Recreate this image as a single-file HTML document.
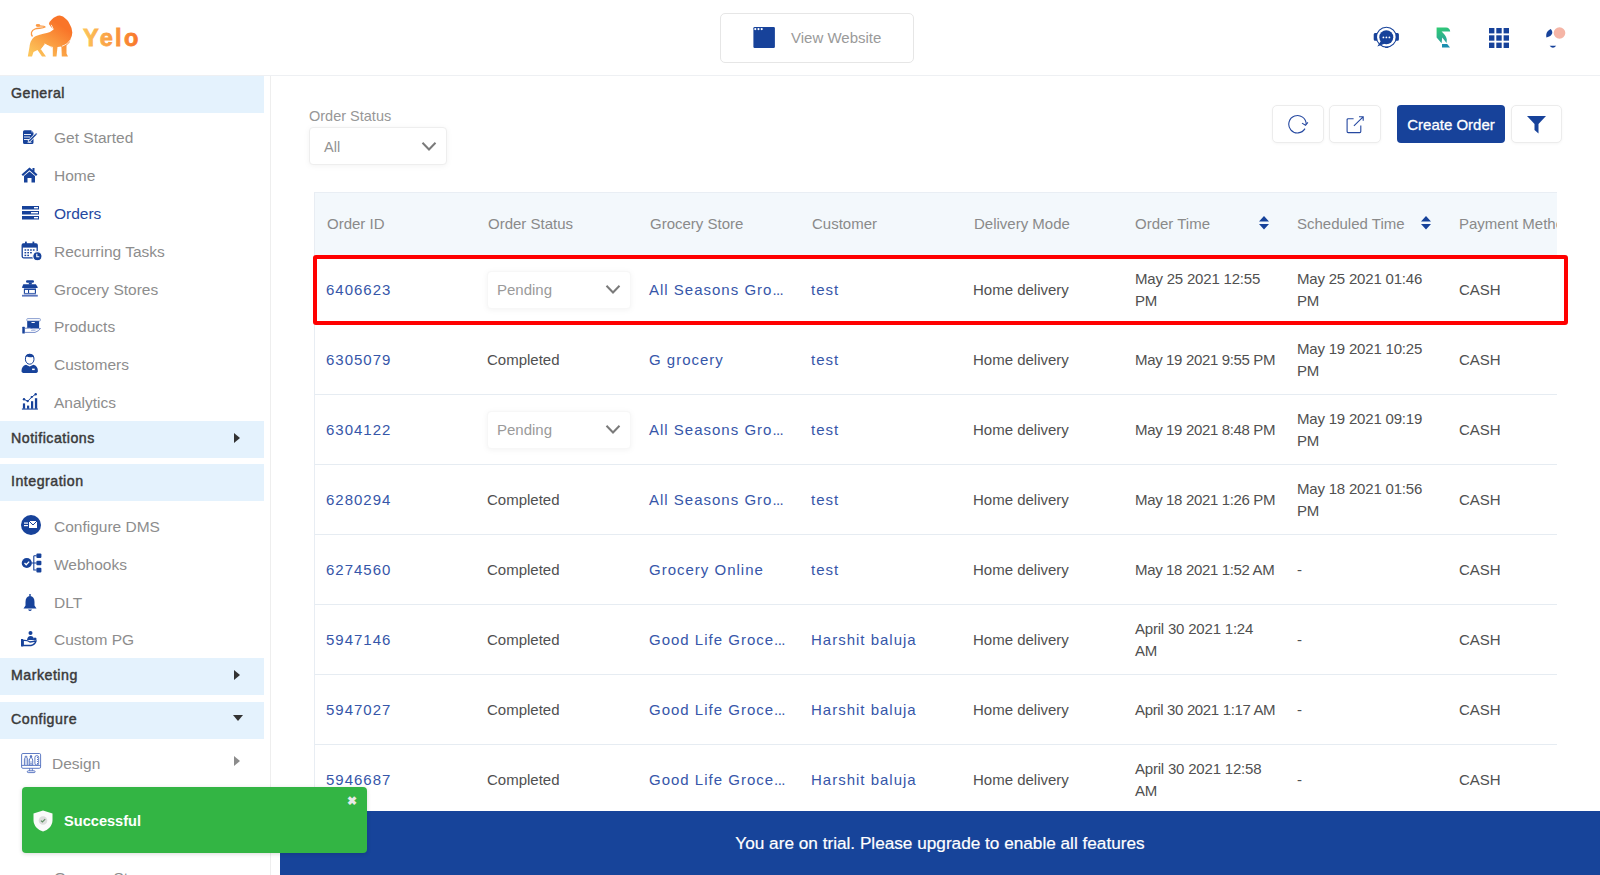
<!DOCTYPE html>
<html><head><meta charset="utf-8">
<style>
*{box-sizing:border-box;margin:0;padding:0}
html,body{width:1600px;height:875px;overflow:hidden;background:#fff;font-family:"Liberation Sans",sans-serif}
.a{position:absolute}
#top{left:0;top:0;width:1600px;height:76px;border-bottom:1px solid #eef0f3;background:#fff}
#side{left:0;top:76px;width:271px;height:799px;border-right:1px solid #eeeeee;background:#fff;overflow:hidden}
.sh{position:absolute;left:0;width:264px;height:37px;background:#e4f2fd;color:#3a3a3a;font-weight:normal;-webkit-text-stroke:0.45px #3a3a3a;letter-spacing:0.5px;font-size:14.2px;line-height:35.5px;padding-left:11px}
.si{position:absolute;left:0;width:264px;height:38px;font-size:15.5px;color:#8d8d8d;line-height:40px}
.si .t{position:absolute;left:54px;top:0}
.si svg{position:absolute}
.tri{position:absolute;width:0;height:0;border-top:5px solid transparent;border-bottom:5px solid transparent;border-left:6px solid #333}
.trid{position:absolute;width:0;height:0;border-left:5px solid transparent;border-right:5px solid transparent;border-top:6px solid #333}
.btn{position:absolute;border:1px solid #ececec;border-radius:5px;background:#fff;box-shadow:0 1px 3px rgba(0,0,0,0.04)}
#tbl{left:314px;top:192px;width:1243px;height:630px;overflow:hidden;border-left:1px solid #e8edf3}
.th{position:absolute;left:0;top:0;width:1300px;height:63px;background:#f3f8fc;border-top:1px solid #e9eef4}
.th span{position:absolute;top:0;line-height:62px;font-size:15px;color:#8a8a8a;white-space:nowrap}
.row{position:absolute;left:0;width:1300px;height:70px;border-bottom:1px solid #e6ecf2}
.row span{position:absolute;font-size:15px;white-space:nowrap}
.c{color:#505050;top:0;line-height:69px}
.l{color:#3656a9;letter-spacing:1px;top:0;line-height:69px}
.m{color:#505050;top:13px;line-height:22px;letter-spacing:-0.2px}
.sel{position:absolute;border:1px solid #f7f7f7;border-radius:4px;background:#fff;box-shadow:0 1px 6px rgba(0,0,0,0.05)}
.chev{position:absolute;width:9px;height:9px;border-right:1.8px solid #777;border-bottom:1.8px solid #777;transform:rotate(45deg)}
</style></head><body>

<div id="top" class="a">
  <!-- logo -->
  <svg class="a" style="left:27px;top:15px" width="47" height="43" viewBox="0 0 47 43">
    <defs><linearGradient id="lg" x1="0.2" y1="1" x2="0.75" y2="0.25"><stop offset="0" stop-color="#fcc45a"/><stop offset="1" stop-color="#f97529"/></linearGradient></defs>
    <path fill="url(#lg)" d="M32.8 0.4L36 1.5L39 4L41 6L43 9.8L44.5 13L45.3 17.6L44.8 21L43.5 24L42.5 27.5L39.5 30.5L39.5 38.5L41 41.4L34.8 41.4L34.4 31.6L30.5 32L29.5 41.4L25.8 41.4L25.8 33C23 31.5 20 30 18 29L14 34.5L19 41.4L15 41.4L10.5 35L6.5 37L5 41.4L0.8 41.4L2.5 32C3 27 5 23 9 21C14 19 19 18.5 23 17L26.6 14.5L24 12L21.9 9L22.5 7L25 4.3C27 2 30 0.5 32.8 0.4Z"/>
    <path fill="none" stroke="#fb9a45" stroke-width="1.3" d="M5.5 21.5C3.5 19 4 15.5 8 14C11 13 16 13.5 18 12C18 10.8 14 10.8 12 10.8"/>
    <ellipse cx="11" cy="10.5" rx="2.3" ry="1.4" fill="#fb9a45"/><path d="M24.2 9.8L26.3 14.2M43.2 25C41.5 28 38.5 30 35 31.2M17.5 28.8C20 30.5 23 31.8 26 32.5M14 34.5L18 29.5" stroke="#fff" stroke-width="0.8" fill="none"/>
  </svg>
  <svg class="a" style="left:80px;top:20px" width="62" height="32" viewBox="0 0 62 32"><defs><linearGradient id="yg" x1="0" y1="0" x2="1" y2="0"><stop offset="0" stop-color="#fcc55b"/><stop offset="1" stop-color="#f87428"/></linearGradient></defs><text x="3" y="26.3" font-family="Liberation Sans" font-weight="bold" font-size="23.5" letter-spacing="2.3" fill="url(#yg)" stroke="url(#yg)" stroke-width="0.8">Yelo</text></svg>

  <!-- view website -->
  <div class="btn" style="left:720px;top:13px;width:194px;height:50px;border-color:#e6e6e6;box-shadow:none"></div>
  <svg class="a" style="left:753px;top:27px" width="23" height="21" viewBox="0 0 23 21"><rect x="0.4" y="0" width="21.5" height="21" rx="1.2" fill="#17429a"/><circle cx="2.3" cy="2.1" r="1.1" fill="#fff"/><circle cx="5.5" cy="2.1" r="1.1" fill="#fff"/><circle cx="8.7" cy="2.1" r="1.1" fill="#fff"/></svg>
  <div class="a" style="left:791px;top:29px;font-size:15px;color:#9a9a9a;line-height:18px">View Website</div>

  <!-- right icons -->
  <svg class="a" style="left:1372px;top:26px" width="29" height="24" viewBox="0 0 29 24">
    <circle cx="14.4" cy="11.2" r="9.9" fill="none" stroke="#17429a" stroke-width="1.1"/>
    
    <circle cx="14.3" cy="11.2" r="7" fill="#17429a"/>
    <path d="M9.2 14.5L5.3 20.5L12.5 17.8Z" fill="#17429a"/>
    <path d="M5.2 7H3Q1.7 7 1.7 8.5V13.2Q1.7 14.7 3 14.7H5.2Q4.4 11 5.2 7Z" fill="#17429a"/><path d="M23.5 7H25.6Q26.9 7 26.9 8.5V13.2Q26.9 14.7 25.6 14.7H23.5Q24.3 11 23.5 7Z" fill="#17429a"/>
    <ellipse cx="14.8" cy="21.4" rx="1.8" ry="0.7" fill="#17429a"/>
    <circle cx="11.4" cy="11.4" r="0.9" fill="#fff"/><circle cx="14.4" cy="11.4" r="0.9" fill="#fff"/><circle cx="17.4" cy="11.4" r="0.9" fill="#fff"/>
  </svg>
  <svg class="a" style="left:1436px;top:27px" width="15" height="22" viewBox="0 0 15 22">
    <defs><linearGradient id="gg" x1="0" y1="0" x2="0.3" y2="1"><stop offset="0" stop-color="#30cc72"/><stop offset="1" stop-color="#2aa39a"/></linearGradient></defs>
    <path fill="url(#gg)" d="M0.6 0.6L10 0.6C12.5 0.6 14.2 2.5 14.2 4.6L5.6 4.4C8 6.5 10.2 9 10.8 12.2L10.6 16L6.2 10.6L5.6 16.2L0.6 10.6Z"/>
    <path fill="#1a8fb0" d="M6 17L11.2 17L14 20.6L6 20.6Z"/>
  </svg>
  <svg class="a" style="left:1489px;top:28px" width="20" height="20" viewBox="0 0 20 20" fill="#17429a">
    <rect x="0" y="0" width="5.4" height="5.4"/><rect x="7.3" y="0" width="5.4" height="5.4"/><rect x="14.6" y="0" width="5.4" height="5.4"/>
    <rect x="0" y="7.3" width="5.4" height="5.4"/><rect x="7.3" y="7.3" width="5.4" height="5.4"/><rect x="14.6" y="7.3" width="5.4" height="5.4"/>
    <rect x="0" y="14.6" width="5.4" height="5.4"/><rect x="7.3" y="14.6" width="5.4" height="5.4"/><rect x="14.6" y="14.6" width="5.4" height="5.4"/>
  </svg>
  <svg class="a" style="left:1544px;top:26px" width="24" height="24" viewBox="0 0 24 24">
    <path d="M2.4 11.6C1.5 7.5 3.5 4.5 6.6 3C9.5 5.5 9 10 2.4 11.6Z" fill="#17429a"/>
    <path d="M5.6 19.8H12.2Q9 23.8 5.6 19.8Z" fill="#17429a"/>
    <circle cx="15.5" cy="7" r="5.8" fill="#f5b5a6"/>
  </svg>
</div>

<div id="side" class="a">
  <div class="sh" style="top:0">General</div>
  <div class="si" style="top:42px"><svg style="left:22px;top:12px" width="16" height="15" viewBox="0 0 16 15"><path d="M2.5 0.3H9L11.5 2.8V12.5A1.5 1.5 0 0 1 10 14H2.5A1.5 1.5 0 0 1 1 12.5V1.8A1.5 1.5 0 0 1 2.5 0.3Z" fill="#17429a"/><path d="M9.2 0.3L11.5 2.6H9.2Z" fill="#7d94cc"/><path d="M2 4.5H9M2 7H8M2 9.5H7" stroke="#fff" stroke-width="0.9"/><path d="M6.5 11.8L13.8 4.5" stroke="#fff" stroke-width="2.8"/><path d="M7 11.3L14 4.3" stroke="#17429a" stroke-width="1.4"/><circle cx="14.3" cy="4" r="0.9" fill="#7d94cc"/><path d="M5.5 12.3H9.5" stroke="#fff" stroke-width="0.8"/></svg><span class="t">Get Started</span></div>
  <div class="si" style="top:80px"><svg style="left:21px;top:11px" width="17" height="16" viewBox="0 0 17 16"><path d="M8.5 0.5L0.5 7.5L2 9L8.5 3.3L15 9L16.5 7.5L13.5 4.8V1H11.5V3L8.5 0.5Z" fill="#17429a"/><path d="M3 9L8.5 4.5L14 9V15.5H10.5V11H6.5V15.5H3Z" fill="#17429a"/></svg><span class="t">Home</span></div>
  <div class="si" style="top:118px;color:#2548a0"><svg style="left:22px;top:12px" width="17" height="14" viewBox="0 0 17 14" fill="#17429a"><rect x="0" y="0" width="17" height="3.5"/><rect x="0" y="5" width="17" height="3.5"/><rect x="0" y="10" width="17" height="3.5"/><rect x="12" y="1" width="4" height="1.4" fill="#fff"/><rect x="9" y="6" width="7" height="1.4" fill="#fff"/><rect x="12" y="11" width="4" height="1.4" fill="#fff"/></svg><span class="t">Orders</span></div>
  <div class="si" style="top:156px"><svg style="left:21px;top:9px" width="22" height="20" viewBox="0 0 22 20"><rect x="1.2" y="2.8" width="15" height="14" rx="1.5" fill="none" stroke="#17429a" stroke-width="1.3"/><rect x="1.2" y="2.8" width="15" height="3.8" fill="#17429a"/><rect x="4" y="0.6" width="1.8" height="3.5" fill="#17429a"/><rect x="11.5" y="0.6" width="1.8" height="3.5" fill="#17429a"/><g fill="#17429a"><rect x="3.5" y="8.3" width="1.7" height="1.4"/><rect x="6.3" y="8.3" width="1.7" height="1.4"/><rect x="9.1" y="8.3" width="1.7" height="1.4"/><rect x="11.9" y="8.3" width="1.7" height="1.4"/><rect x="3.5" y="11" width="1.7" height="1.4"/><rect x="6.3" y="11" width="1.7" height="1.4"/><rect x="9.1" y="11" width="1.7" height="1.4"/><rect x="3.5" y="13.7" width="1.7" height="1.4"/><rect x="6.3" y="13.7" width="1.7" height="1.4"/></g><circle cx="16.4" cy="15.2" r="4.6" fill="#17429a" stroke="#fff" stroke-width="1.1"/><path d="M15.8 12.8V15.8H18.3" stroke="#fff" stroke-width="1.1" fill="none"/></svg><span class="t">Recurring Tasks</span></div>
  <div class="si" style="top:194px"><svg style="left:21px;top:10px" width="18" height="18" viewBox="0 0 18 18"><rect x="5" y="0.2" width="8" height="2.5" rx="1.2" fill="#17429a"/><rect x="7.8" y="2.5" width="3" height="2" fill="#17429a"/><path d="M2.3 4.3H14.8L16.8 7.2Q16.8 8 16 8H1.8Q1 8 1 7.2Z" fill="#17429a"/><rect x="2.9" y="8" width="12" height="1.1" fill="#8ba0d3"/><rect x="3.4" y="9.4" width="11" height="4.1" fill="none" stroke="#17429a" stroke-width="1.1"/><rect x="7" y="9" width="1.1" height="4.8" fill="#17429a"/><rect x="3" y="13.5" width="12" height="1" fill="#8ba0d3"/><rect x="1" y="14.8" width="15.8" height="1.8" fill="#5c76bd"/></svg><span class="t">Grocery Stores</span></div>
  <div class="si" style="top:231px"><svg style="left:21px;top:10px" width="21" height="18" viewBox="0 0 21 18"><rect x="5.8" y="1.6" width="13.6" height="2.4" rx="0.8" fill="none" stroke="#7f95cc" stroke-width="0.9"/><rect x="6.2" y="4.1" width="11.9" height="7" fill="#17429a"/><rect x="10.4" y="5" width="3.5" height="1" rx="0.5" fill="#fff"/><rect x="1.3" y="9.8" width="2.5" height="6.8" rx="0.5" fill="#17429a"/><path d="M3.8 11.3Q9 10.5 12 11.8L19.5 11.5Q18 14 14 15.4H4" fill="none" stroke="#6680c4" stroke-width="0.9"/><path d="M10 13.3H14.5" stroke="#8ba0d3" stroke-width="0.8"/></svg><span class="t">Products</span></div>
  <div class="si" style="top:269px"><svg style="left:21px;top:8px" width="18" height="21" viewBox="0 0 18 21"><ellipse cx="8.7" cy="6.2" rx="4.3" ry="5" fill="none" stroke="#17429a" stroke-width="1"/><path d="M4.2 5.5Q4 1 8.7 1.1Q13.4 1 13.2 5.5Q12.6 3.6 10.5 4.3Q7 4.6 5.5 3.3Q4.8 4 4.2 5.5Z" fill="#17429a"/><path d="M0.5 18Q0.5 13 5 11.8L8.7 13.5L12.4 11.8Q16.9 13 16.9 18Q16.9 20 14 20H3.5Q0.5 20 0.5 18Z" fill="#17429a"/><rect x="11.1" y="15.6" width="2.6" height="1.5" fill="#fff"/></svg><span class="t">Customers</span></div>
  <div class="si" style="top:307px"><svg style="left:21px;top:10px" width="18" height="17" viewBox="0 0 18 17" fill="#17429a"><rect x="1.9" y="10.4" width="2.2" height="5.4"/><rect x="6" y="12.6" width="2.2" height="3.2"/><rect x="10" y="8.2" width="2.2" height="7.6"/><rect x="13.9" y="5.2" width="2.3" height="10.6"/><rect x="0.9" y="15.5" width="16" height="1.1"/><path d="M3 6.3L6.7 8.2L10.7 4.1L14.7 1.2" stroke="#17429a" stroke-width="1" fill="none"/><circle cx="3" cy="6.3" r="1.2"/><circle cx="6.7" cy="8.2" r="1.1"/><circle cx="10.7" cy="4.1" r="1.1"/><circle cx="14.7" cy="1.2" r="1.2"/></svg><span class="t">Analytics</span></div>
  <div class="sh" style="top:345px">Notifications<span class="tri" style="left:234px;top:12px"></span></div>
  <div class="sh" style="top:388px">Integration</div>
  <div class="si" style="top:431px"><svg style="left:21px;top:8px" width="20" height="20" viewBox="0 0 20 20"><circle cx="10" cy="10" r="10" fill="#17429a"/><rect x="8" y="6" width="8" height="7" fill="#fff"/><path d="M8 6L12 10L16 6" stroke="#17429a" stroke-width="1" fill="none"/><rect x="3" y="7.5" width="4" height="1.2" fill="#fff"/><rect x="3" y="10" width="4" height="1.2" fill="#fff"/></svg><span class="t">Configure DMS</span></div>
  <div class="si" style="top:469px"><svg style="left:21px;top:8px" width="22" height="20" viewBox="0 0 22 20"><circle cx="5.8" cy="10" r="5.1" fill="#17429a"/><path d="M3.5 10L5.2 11.7L8.2 8.6" stroke="#fff" stroke-width="1.3" fill="none"/><path d="M10.5 10H15.6M12.8 2.8V17H15.6M12.8 2.8H15.6" stroke="#17429a" stroke-width="1.1" fill="none"/><rect x="15.4" y="0.5" width="5" height="4.6" rx="1" fill="#17429a"/><rect x="15.4" y="7.7" width="5" height="4.6" rx="1" fill="#17429a"/><rect x="15.4" y="14.8" width="5" height="4.6" rx="1" fill="#17429a"/></svg><span class="t">Webhooks</span></div>
  <div class="si" style="top:507px"><svg style="left:23px;top:11px" width="14" height="18" viewBox="0 0 14 18" fill="#17429a"><rect x="6.3" y="0" width="1.4" height="2.5"/><path d="M7 2Q2.5 2.5 2.5 8V11.5L0.5 14.5H13.5L11.5 11.5V8Q11.5 2.5 7 2Z"/><path d="M5 15.5Q7 18.5 9 15.5Z"/></svg><span class="t">DLT</span></div>
  <div class="si" style="top:544px"><svg style="left:21px;top:11px" width="17" height="16" viewBox="0 0 17 16" fill="#17429a"><circle cx="9.5" cy="2" r="2"/><path d="M6 9Q6.5 5 9.5 5Q13 5 13 9Z"/><circle cx="14" cy="8" r="1.6"/><rect x="0" y="8" width="2.2" height="7.5"/><path d="M2.2 9.5Q6 9 9 11L15 10Q14 13.5 10 14.5H2.2Z" fill="none" stroke="#17429a" stroke-width="1.4"/></svg><span class="t">Custom PG</span></div>
  <div class="sh" style="top:582px">Marketing<span class="tri" style="left:234px;top:12px"></span></div>
  <div class="sh" style="top:626px">Configure<span class="trid" style="left:233px;top:13px"></span></div>
  <div class="si" style="top:668px"><svg style="left:21px;top:9px" width="21" height="21" viewBox="0 0 21 21" fill="none" stroke="#4e6dbd" stroke-width="0.9"><rect x="0.6" y="0.5" width="19" height="14.8" rx="1.3"/><path d="M0.6 12.4H19.6M8.7 15.3V17.8M11.3 15.3V17.8"/><rect x="6.3" y="17.8" width="7.8" height="1.8" rx="0.9"/><path d="M3.4 12V6Q3.4 5.3 4.2 5.3V3.3H5.8V5.3Q6.7 5.3 6.7 6V12"/><path d="M5 6V12" stroke="#8ba0d3"/><path d="M10 3.2L11.7 7V12H8.3V7Z"/><circle cx="10" cy="3.3" r="0.8" fill="#4e6dbd"/><path d="M8.5 9H11.5M8.5 10.5H11.5" stroke="#8ba0d3"/><rect x="13.9" y="2.6" width="3.8" height="9.5" rx="1.9"/><path d="M16 4.5H17M16 6.5H17M16 8.5H17M16 10.5H17"/></svg><span class="t" style="left:52px">Design</span><span class="tri" style="left:234px;top:12px;border-left-color:#8c8c8c"></span></div>
  <div class="si" style="top:781.5px"><span class="t">Grocery Store</span></div>
</div>

<!-- content top controls -->
<div class="a" style="left:309px;top:107px;font-size:14.5px;color:#979797;line-height:18px">Order Status</div>
<div class="sel" style="left:309px;top:127px;width:138px;height:38px;border-color:#eeeeee"></div>
<div class="a" style="left:324px;top:138px;font-size:14.5px;color:#929292;line-height:18px">All</div>
<svg class="a" style="left:421px;top:141px" width="16" height="11" viewBox="0 0 16 11"><path d="M1.5 1.8L8 8.5L14.5 1.8" fill="none" stroke="#7a7a7a" stroke-width="2"/></svg>

<div class="btn" style="left:1272px;top:105px;width:52px;height:38px"></div>
<svg class="a" style="left:1287px;top:114px" width="23" height="21" viewBox="0 0 23 21"><path d="M18 14.65A8.7 8.7 0 1 1 19.2 10.3" fill="none" stroke="#2548a0" stroke-width="1.1"/><path d="M15 9.1L18.5 11.2L20.9 8.3" fill="none" stroke="#2548a0" stroke-width="1.1"/></svg>
<div class="btn" style="left:1329px;top:105px;width:52px;height:38px"></div>
<svg class="a" style="left:1345px;top:115px" width="20" height="19" viewBox="0 0 20 19"><path d="M8.6 3.7H3.1A1 1 0 0 0 2.1 4.7V16.6A1 1 0 0 0 3.1 17.6H14.8A1 1 0 0 0 15.8 16.6V10.4" fill="none" stroke="#2548a0" stroke-width="1.1"/><path d="M8.9 10.8L18.1 1.9M14 1.7H18.2V5.8" fill="none" stroke="#2548a0" stroke-width="1.1"/></svg>
<div class="a" style="left:1397px;top:105px;width:108px;height:38px;background:#17429a;border-radius:4px;color:#fff;font-size:15px;line-height:39px;-webkit-text-stroke:0.3px #fff;text-align:center">Create Order</div>
<div class="btn" style="left:1511px;top:105px;width:51px;height:38px"></div>
<svg class="a" style="left:1527px;top:116px" width="19" height="18" viewBox="0 0 19 18"><path d="M0 0H19L11.5 8V17.5L7.5 14V8Z" fill="#17429a"/></svg>

<!-- table -->
<div id="tbl" class="a">
  <div class="th">
    <span style="left:12px">Order ID</span>
    <span style="left:173px">Order Status</span>
    <span style="left:335px">Grocery Store</span>
    <span style="left:497px">Customer</span>
    <span style="left:659px">Delivery Mode</span>
    <span style="left:820px">Order Time</span>
    <span style="left:982px">Scheduled Time</span>
    <span style="left:1144px">Payment Method</span>
    <svg style="position:absolute;left:944px;top:23px" width="10" height="14" viewBox="0 0 10 14" fill="#17429a"><path d="M5 0L10 5.5H0Z M0 8H10L5 13.5Z"/></svg>
    <svg style="position:absolute;left:1106px;top:23px" width="10" height="14" viewBox="0 0 10 14" fill="#17429a"><path d="M5 0L10 5.5H0Z M0 8H10L5 13.5Z"/></svg>
  </div>
  <div class="row" style="top:63px"><span class="l" style="left:11px">6406623</span><div class="sel" style="left:172px;top:16px;width:144px;height:38px"></div><span class="c" style="left:182px;color:#9a9a9a">Pending</span><svg style="position:absolute;left:290px;top:29px" width="16" height="11" viewBox="0 0 16 11"><path d="M1.5 1.8L8 8.5L14.5 1.8" fill="none" stroke="#7a7a7a" stroke-width="2"/></svg><span class="l" style="left:334px">All Seasons Gro<i style="font-style:normal;letter-spacing:-0.6px">...</i></span><span class="l" style="left:496px">test</span><span class="c" style="left:658px">Home delivery</span><span class="m" style="left:820px">May 25 2021 12:55<br>PM</span><span class="m" style="left:982px">May 25 2021 01:46<br>PM</span><span class="c" style="left:1144px">CASH</span></div>
  <div class="row" style="top:133px"><span class="l" style="left:11px">6305079</span><span class="c" style="left:172px">Completed</span><span class="l" style="left:334px">G grocery</span><span class="l" style="left:496px">test</span><span class="c" style="left:658px">Home delivery</span><span class="c" style="left:820px;letter-spacing:-0.35px">May 19 2021 9:55 PM</span><span class="m" style="left:982px">May 19 2021 10:25<br>PM</span><span class="c" style="left:1144px">CASH</span></div>
  <div class="row" style="top:203px"><span class="l" style="left:11px">6304122</span><div class="sel" style="left:172px;top:16px;width:144px;height:38px"></div><span class="c" style="left:182px;color:#9a9a9a">Pending</span><svg style="position:absolute;left:290px;top:29px" width="16" height="11" viewBox="0 0 16 11"><path d="M1.5 1.8L8 8.5L14.5 1.8" fill="none" stroke="#7a7a7a" stroke-width="2"/></svg><span class="l" style="left:334px">All Seasons Gro<i style="font-style:normal;letter-spacing:-0.6px">...</i></span><span class="l" style="left:496px">test</span><span class="c" style="left:658px">Home delivery</span><span class="c" style="left:820px;letter-spacing:-0.35px">May 19 2021 8:48 PM</span><span class="m" style="left:982px">May 19 2021 09:19<br>PM</span><span class="c" style="left:1144px">CASH</span></div>
  <div class="row" style="top:273px"><span class="l" style="left:11px">6280294</span><span class="c" style="left:172px">Completed</span><span class="l" style="left:334px">All Seasons Gro<i style="font-style:normal;letter-spacing:-0.6px">...</i></span><span class="l" style="left:496px">test</span><span class="c" style="left:658px">Home delivery</span><span class="c" style="left:820px;letter-spacing:-0.35px">May 18 2021 1:26 PM</span><span class="m" style="left:982px">May 18 2021 01:56<br>PM</span><span class="c" style="left:1144px">CASH</span></div>
  <div class="row" style="top:343px"><span class="l" style="left:11px">6274560</span><span class="c" style="left:172px">Completed</span><span class="l" style="left:334px">Grocery Online</span><span class="l" style="left:496px">test</span><span class="c" style="left:658px">Home delivery</span><span class="c" style="left:820px;letter-spacing:-0.35px">May 18 2021 1:52 AM</span><span class="c" style="left:982px">-</span><span class="c" style="left:1144px">CASH</span></div>
  <div class="row" style="top:413px"><span class="l" style="left:11px">5947146</span><span class="c" style="left:172px">Completed</span><span class="l" style="left:334px">Good Life Groce<i style="font-style:normal;letter-spacing:-0.6px">...</i></span><span class="l" style="left:496px">Harshit baluja</span><span class="c" style="left:658px">Home delivery</span><span class="m" style="left:820px">April 30 2021 1:24<br>AM</span><span class="c" style="left:982px">-</span><span class="c" style="left:1144px">CASH</span></div>
  <div class="row" style="top:483px"><span class="l" style="left:11px">5947027</span><span class="c" style="left:172px">Completed</span><span class="l" style="left:334px">Good Life Groce<i style="font-style:normal;letter-spacing:-0.6px">...</i></span><span class="l" style="left:496px">Harshit baluja</span><span class="c" style="left:658px">Home delivery</span><span class="c" style="left:820px;letter-spacing:-0.35px">April 30 2021 1:17 AM</span><span class="c" style="left:982px">-</span><span class="c" style="left:1144px">CASH</span></div>
  <div class="row" style="top:553px"><span class="l" style="left:11px">5946687</span><span class="c" style="left:172px">Completed</span><span class="l" style="left:334px">Good Life Groce<i style="font-style:normal;letter-spacing:-0.6px">...</i></span><span class="l" style="left:496px">Harshit baluja</span><span class="c" style="left:658px">Home delivery</span><span class="m" style="left:820px">April 30 2021 12:58<br>AM</span><span class="c" style="left:982px">-</span><span class="c" style="left:1144px">CASH</span></div>
</div>

<!-- red highlight -->
<div class="a" style="left:313px;top:255px;width:1255px;height:70px;border:4px solid #ff0000;border-radius:3px"></div>

<!-- banner -->
<div class="a" style="left:280px;top:811px;width:1320px;height:64px;background:#17449a;color:#fff;font-size:17.2px;-webkit-text-stroke:0.2px #fff;text-align:center;line-height:65px">You are on trial. Please upgrade to enable all features</div>

<!-- toast -->
<div class="a" style="left:22px;top:787px;width:345px;height:66px;background:#33b544;border-radius:4px;box-shadow:0 1px 4px rgba(0,0,0,0.15)"></div>
<svg class="a" style="left:33px;top:810px" width="20" height="22" viewBox="0 0 20 22"><path d="M10 0.5L19.5 3.5V10C19.5 16 15 20 10 21.5C5 20 0.5 16 0.5 10V3.5Z" fill="#fafafa"/><circle cx="10" cy="10.5" r="4.3" fill="#dedede"/><path d="M7.9 10.6L9.4 12L12.2 9.2" stroke="#5f8f62" stroke-width="1.2" fill="none"/></svg>
<div class="a" style="left:64px;top:812px;font-size:14.6px;font-weight:bold;color:#fff;line-height:18px">Successful</div>
<div class="a" style="left:347px;top:793px;font-size:12px;font-weight:bold;color:#e9e9e9;line-height:16px">&#x2716;</div>

</body></html>
